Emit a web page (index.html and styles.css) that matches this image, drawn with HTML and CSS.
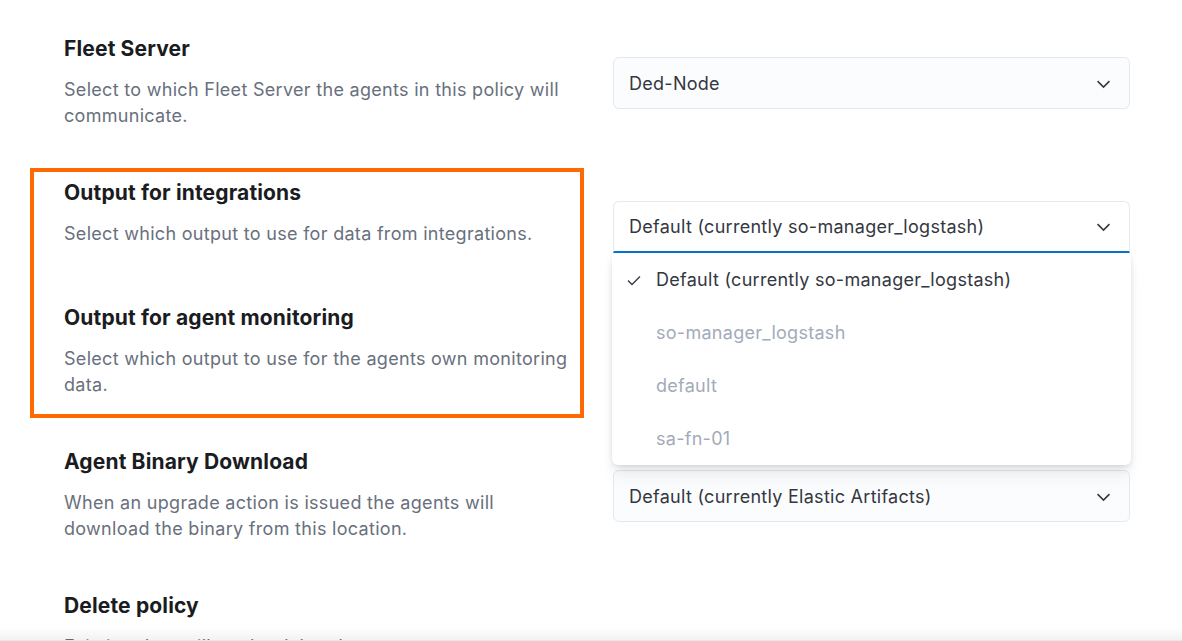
FILE: index.html
```html
<!DOCTYPE html>
<html lang="en">
<head>
    <meta charset="UTF-8">
    <meta name="viewport" content="width=device-width, initial-scale=1.0">
    <title>Agent policy settings</title>
    <link rel="stylesheet" href="styles.css">
</head>
<body>
    <div class="settings">
        <div class="row">
            <div class="row-text">
                <h3>Fleet Server</h3>
                <p>Select to which Fleet Server the agents in this policy will communicate.</p>
            </div>
            <div class="row-field">
                <div class="select">
                    <span>Ded-Node</span>
                    <svg class="chevron" viewBox="0 0 16 16"><path d="M3 6l5 5 5-5"/></svg>
                </div>
            </div>
        </div>

        <div class="row">
            <div class="row-text">
                <h3>Output for integrations</h3>
                <p>Select which output to use for data from integrations.</p>
            </div>
            <div class="row-field">
                <div class="select select-open">
                    <span>Default (currently so-manager_logstash)</span>
                    <svg class="chevron" viewBox="0 0 16 16"><path d="M3 6l5 5 5-5"/></svg>
                    <ul class="options">
                        <li class="option checked">
                            <svg class="check" viewBox="0 0 16 16"><path d="M2 8.5l4 4 8-8"/></svg>
                            Default (currently so-manager_logstash)
                        </li>
                        <li class="option disabled">so-manager_logstash</li>
                        <li class="option disabled">default</li>
                        <li class="option disabled">sa-fn-01</li>
                    </ul>
                </div>
            </div>
        </div>

        <div class="row">
            <div class="row-text">
                <h3>Output for agent monitoring</h3>
                <p>Select which output to use for the agents own monitoring data.</p>
            </div>
            <div class="row-field">
                <div class="select">
                    <span>Default (currently so-manager_logstash)</span>
                    <svg class="chevron" viewBox="0 0 16 16"><path d="M3 6l5 5 5-5"/></svg>
                </div>
            </div>
        </div>

        <div class="row">
            <div class="row-text">
                <h3>Agent Binary Download</h3>
                <p>When an upgrade action is issued the agents will download the binary from this location.</p>
            </div>
            <div class="row-field">
                <div class="select">
                    <span>Default (currently Elastic Artifacts)</span>
                    <svg class="chevron" viewBox="0 0 16 16"><path d="M3 6l5 5 5-5"/></svg>
                </div>
            </div>
        </div>

        <div class="row">
            <div class="row-text">
                <h3>Delete policy</h3>
                <p>Existing data will not be deleted.</p>
            </div>
            <div class="row-field"></div>
        </div>

        <div class="highlight"></div>
    </div>
    <div class="bottom-shade"></div>
</body>
</html>
```

FILE: styles.css
```css
* {
    margin: 0;
    padding: 0;
    box-sizing: border-box;
}

body {
    font-family: Inter, 'Noto Sans', sans-serif;
    background: #fff;
    color: #343741;
    overflow: hidden;
}

.settings {
    position: relative;
    padding: 36px 0 0 64px;
}

.row {
    display: grid;
    grid-template-columns: 515px 517px;
    column-gap: 34px;
    margin-bottom: 51px;
}

.row-text {
    padding-top: 1px;
}

.row-text h3 {
    font-size: 21px;
    line-height: 24px;
    font-weight: 700;
    letter-spacing: 0.15px;
    color: #1a1c21;
    margin-bottom: 16px;
}

.row-text p {
    font-size: 18px;
    line-height: 26px;
    letter-spacing: 0.3px;
    color: #69707d;
}

.row-field {
    padding: 21px 0 1px;
}

.select {
    position: relative;
    display: flex;
    align-items: center;
    justify-content: space-between;
    height: 52px;
    padding: 0 16px 0 15px;
    background: #fbfcfd;
    border: 1px solid #e4e8f1;
    border-radius: 6px;
    font-size: 18px;
    letter-spacing: 0.28px;
    color: #343741;
}

.select-open {
    background: #fff;
    border-bottom: 2px solid #0b77cc;
    border-radius: 6px 6px 0 0;
    z-index: 2;
}

.chevron {
    width: 19px;
    height: 19px;
    fill: none;
    stroke: #343741;
    stroke-width: 1.3;
}

.options {
    position: absolute;
    top: 100%;
    left: -2px;
    right: -2px;
    margin-top: 2px;
    list-style: none;
    background: #fff;
    border-radius: 0 0 6px 6px;
    box-shadow: 0 0.9px 4px -1px rgba(0,0,0,0.08),
                0 2.6px 8px -1px rgba(0,0,0,0.06),
                0 5.7px 12px -1px rgba(0,0,0,0.05),
                0 15px 15px -1px rgba(0,0,0,0.04);
}

.option {
    display: flex;
    align-items: center;
    height: 53px;
    padding-left: 44px;
    font-size: 18px;
    letter-spacing: 0.28px;
    color: #343741;
}

.option.checked {
    padding-left: 14px;
}

.option.disabled {
    color: #a2abba;
}

.check {
    width: 16px;
    height: 16px;
    margin-right: 14px;
    fill: none;
    stroke: #343741;
    stroke-width: 1.3;
}

.highlight {
    position: absolute;
    left: 30px;
    top: 168px;
    width: 554px;
    height: 250px;
    border: 4px solid #ff6a00;
    pointer-events: none;
}

.bottom-shade {
    position: fixed;
    left: 0;
    right: 0;
    bottom: 0;
    height: 14px;
    background: linear-gradient(to bottom, rgba(0,0,0,0), rgba(0,0,0,0.05));
    border-bottom: 1px solid #e6e6e6;
}
```
